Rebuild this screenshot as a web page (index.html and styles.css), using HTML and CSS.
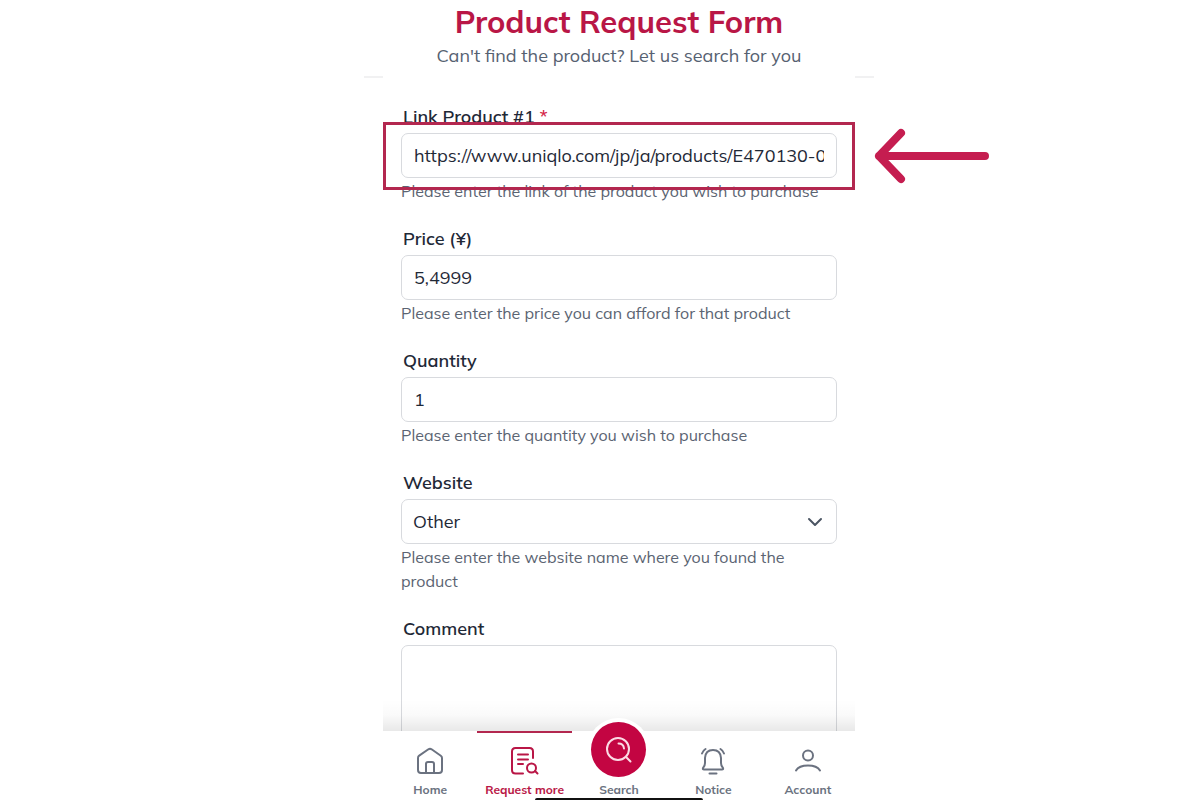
FILE: index.html
```html
<!DOCTYPE html>
<html lang="en">
<head>
<meta charset="utf-8">
<meta name="viewport" content="width=device-width, initial-scale=1">
<title>Product Request Form</title>
<link rel="stylesheet" href="styles.css">
</head>
<body>
<div class="app">
  <header class="header">
    <h1 class="title">Product Request Form</h1>
    <p class="subtitle">Can't find the product? Let us search for you</p>
  </header>
  <form class="form">
    <div class="field">
      <label class="label" for="link">Link Product #1 <span class="required">*</span></label>
      <div class="marked">
        <div class="frame"></div>
        <svg class="arrow" viewBox="0 0 116 56" aria-hidden="true"><path d="M111 28H5M27 5 5 28l22 23"/></svg>
        <input class="control" id="link" type="text" value="https://www.uniqlo.com/jp/ja/products/E470130-000">
      </div>
      <p class="hint">Please enter the link of the product you wish to purchase</p>
    </div>
    <div class="field">
      <label class="label" for="price">Price (¥)</label>
      <input class="control" id="price" type="text" value="5,4999">
      <p class="hint">Please enter the price you can afford for that product</p>
    </div>
    <div class="field">
      <label class="label" for="quantity">Quantity</label>
      <input class="control" id="quantity" type="text" value="1">
      <p class="hint">Please enter the quantity you wish to purchase</p>
    </div>
    <div class="field">
      <label class="label" for="website">Website</label>
      <div class="select-box">
        <select class="control" id="website"><option>Other</option></select>
        <svg class="chevron" viewBox="0 0 16 16" aria-hidden="true"><path d="m2 5 6 6 6-6"/></svg>
      </div>
      <p class="hint">Please enter the website name where you found the product</p>
    </div>
    <div class="field">
      <label class="label" for="comment">Comment</label>
      <textarea class="control comment" id="comment"></textarea>
    </div>
  </form>
  <nav class="tabs">
    <a class="tab" href="#home">
      <svg class="icon" viewBox="0 0 28 28" aria-hidden="true"><path d="M2 11Q2 9.500 3.200 8.700L12.400 2.300Q14 1.300 15.600 2.300L24.800 8.700Q26 9.500 26 11V23Q26 26 23 26H5Q2 26 2 23ZM10 26V17Q10 15 12 15h4q2 0 2 2v9"/></svg>
      <span>Home</span>
    </a>
    <a class="tab tab-active" href="#request">
      <svg class="icon" viewBox="0 0 28 28" aria-hidden="true"><path d="M12 26.500H4.500Q1 26.500 1 23V4.500Q1 1 4.500 1h14Q22 1 22 4.500V11M7 7.500h10M7 12.500h10M7 17h5"/><circle cx="20.500" cy="21" r="4.500"/><path d="m24 24 2.500 2.500"/></svg>
      <span>Request more</span>
    </a>
    <a class="tab" href="#search">
      <span class="search-disc"><svg class="icon" viewBox="0 0 28 28" aria-hidden="true"><circle cx="13" cy="13" r="11"/><path d="m20.800 20.800 4.700 4.700M13.500 7.500q5 0 5.500 5"/></svg></span>
      <span>Search</span>
    </a>
    <a class="tab" href="#notice">
      <svg class="icon" viewBox="0 0 28 28" aria-hidden="true"><path d="M6 11Q6.500 3 14 3t8 8v5q0 3 2 5 .500 1.500-1 1.500H5q-1.500 0-1-1.500 2-2 2-5ZM10.500 26.500h7M3 6.500Q4 3.500 6.500 2M25 6.500Q24 3.500 21.500 2"/></svg>
      <span>Notice</span>
    </a>
    <a class="tab" href="#account">
      <svg class="icon" viewBox="0 0 28 28" aria-hidden="true"><circle cx="14" cy="8.500" r="5"/><path d="M2 23.500q3-5 12-5t12 5"/></svg>
      <span>Account</span>
    </a>
    <div class="home-bar"></div>
  </nav>
</div>
</body>
</html>
```
FILE: styles.css
```css
* {
  box-sizing: border-box;
}

body {
  margin: 0;
  padding-left: 38px;
  background: #fff;
  color: #1f2937;
  font-family: Mulish, Nunito, Lato, sans-serif;
  font-size: 18px;
}

h1,
p {
  margin: 0;
}

.app {
  display: flex;
  flex-direction: column;
  max-width: 472px;
  height: 100vh;
  margin: 0 auto;
}

.header {
  position: relative;
  padding-bottom: 37px;
  text-align: center;
}

.header::before,
.header::after {
  content: "";
  position: absolute;
  bottom: 27px;
  width: 19px;
  height: 2px;
  background: #f1f1f2;
}

.header::before {
  right: 100%;
}

.header::after {
  left: 100%;
}

.title {
  color: #b91646;
  font-size: 31px;
  font-weight: 700;
  line-height: 44px;
}

.subtitle {
  color: #566171;
  line-height: 24px;
}

.form {
  display: flex;
  flex: 1;
  flex-direction: column;
  gap: 24px;
  min-height: 0;
  padding: 0 18px;
  overflow-x: visible;
  overflow-y: clip;
}

.field {
  display: flex;
  flex-direction: column;
  flex-shrink: 0;
}

.label {
  margin-bottom: 4px;
  padding-left: 2px;
  font-weight: 600;
  line-height: 24px;
}

.required {
  color: #d42447;
}

.control {
  display: block;
  width: 100%;
  height: 45px;
  margin: 0 0 1px;
  padding: 0 12px;
  border: 1px solid #d8dade;
  border-radius: 7px;
  outline: 0;
  background: #fff;
  color: #1f2937;
  font: inherit;
}

select.control {
  appearance: none;
  padding: 0 11px;
}

.comment {
  height: 120px;
  resize: none;
}

.hint {
  color: #5b6472;
  font-size: 16px;
  line-height: 24px;
}

.marked,
.select-box {
  position: relative;
}

.frame {
  position: absolute;
  inset: -11px -18px;
  border: 3px solid #b3274f;
  pointer-events: none;
}

.arrow {
  position: absolute;
  top: -5px;
  left: calc(100% + 37px);
  width: 116px;
  height: 56px;
  fill: none;
  stroke: #c51d50;
  stroke-width: 8;
  stroke-linecap: round;
  stroke-linejoin: round;
}

.chevron {
  position: absolute;
  top: 15px;
  right: 14px;
  width: 16px;
  height: 16px;
  fill: none;
  stroke: #4b5563;
  stroke-width: 2;
  stroke-linecap: round;
  stroke-linejoin: round;
  pointer-events: none;
}

.tabs {
  position: relative;
  display: grid;
  grid-template-rows: 100%;
  grid-template-columns: repeat(5, 1fr);
  height: 69px;
  background: #fff;
}

.tabs::before {
  content: "";
  position: absolute;
  right: 0;
  bottom: 100%;
  left: 0;
  height: 32px;
  background: linear-gradient(rgb(0 0 0 / 0%), rgb(0 0 0 / 2%) 50%, rgb(0 0 0 / 9%));
}

.tab {
  position: relative;
  display: flex;
  flex-direction: column;
  align-items: center;
  justify-content: flex-end;
  gap: 6px;
  padding-bottom: 1px;
  color: #6b7280;
  font-size: 12px;
  font-weight: 700;
  line-height: 18px;
  text-decoration: none;
  white-space: nowrap;
}

.tab-active {
  border-top: 2px solid #b3274f;
  color: #b91646;
}

.icon {
  flex-shrink: 0;
  width: 28px;
  height: 28px;
  fill: none;
  stroke: currentColor;
  stroke-width: 2;
  stroke-linecap: round;
  stroke-linejoin: round;
}

.search-disc {
  display: flex;
  flex-shrink: 0;
  align-items: center;
  justify-content: center;
  width: 55px;
  height: 55px;
  margin-bottom: -2px;
  border-radius: 50%;
  background: #c30542;
  box-shadow: 0 0 0 4px #fff;
  color: #fbdbe5;
}

.home-bar {
  position: absolute;
  bottom: 0;
  left: 50%;
  width: 168px;
  height: 2px;
  border-radius: 2px 2px 0 0;
  background: #111;
  transform: translateX(-50%);
}
```
